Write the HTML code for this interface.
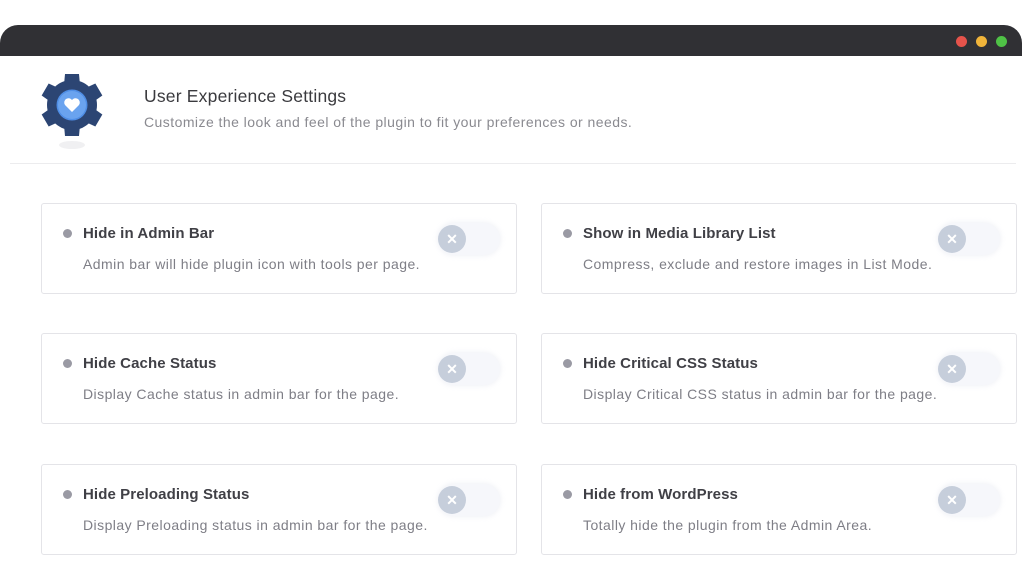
<!DOCTYPE html>
<html><head><style>
body{margin:0;width:1024px;height:576px;background:#fff;font-family:"Liberation Sans",sans-serif;position:relative;overflow:hidden}
.bar{position:absolute;left:0;top:25px;width:1022px;height:31px;background:#303034;border-radius:18px 18px 0 0}
.d{position:absolute;top:36px;width:11px;height:11px;border-radius:50%}
.h1{position:absolute;left:144px;top:86px;font-size:17.5px;color:#3a3a3e;letter-spacing:.2px}
.sub{position:absolute;left:144px;top:114px;font-size:14px;color:#8a8a90;letter-spacing:.45px}
.div{position:absolute;left:10px;top:163px;width:1006px;height:1px;background:#ececee}
.card{position:absolute;width:476px;height:91px;border:1px solid #e4e4e8;border-radius:3px;box-sizing:border-box}
.card .dot{position:absolute;left:21px;top:25px;width:9px;height:9px;border-radius:50%;background:#9a9aa4}
.card .t{position:absolute;left:41px;top:21px;font-size:15px;font-weight:bold;color:#404046;letter-spacing:.1px}
.card .s{position:absolute;left:41px;top:52px;font-size:14px;color:#7e7e86;letter-spacing:.45px}
.tg{position:absolute;left:396px;top:19px;width:62px;height:32px;border-radius:16px;background:#f6f7fb;box-shadow:0 0 6px rgba(230,232,240,.8)}
.tg .k{position:absolute;left:0px;top:2px;width:28px;height:28px;border-radius:50%;background:#c6cedb;color:#fff;font-size:14px;font-weight:bold;text-align:center;line-height:28px}
</style></head><body>
<div class="bar"></div>
<div class="d" style="left:956px;background:#e5534b"></div>
<div class="d" style="left:976px;background:#f0b43a"></div>
<div class="d" style="left:996px;background:#4fc246"></div>
<svg style="position:absolute;left:37px;top:70px" width="72" height="85" viewBox="0 0 72 85">
<ellipse cx="35" cy="75" rx="13" ry="4" fill="#f0f0f2"/>
<g transform="translate(35,35)" fill="#2c4573">
<circle r="25"/>
<g id="t"><path d="M-7 -31 H7 L8 -20 H-8 Z"/></g>
<use href="#t" transform="rotate(60)"/><use href="#t" transform="rotate(120)"/><use href="#t" transform="rotate(180)"/><use href="#t" transform="rotate(240)"/><use href="#t" transform="rotate(300)"/>
<circle r="15.5" fill="#4f8ee6"/><circle r="14" fill="#6aa3ef"/>
<path d="M0 7 L-7 0 A3.8 3.8 0 0 1 0 -5 A3.8 3.8 0 0 1 7 0 Z" fill="#fff"/>
</g></svg>
<div class="h1">User Experience Settings</div>
<div class="sub">Customize the look and feel of the plugin to fit your preferences or needs.</div>
<div class="div"></div>

<div class="card" style="left:41px;top:203px"><div class="dot"></div><div class="t">Hide in Admin Bar</div><div class="s">Admin bar will hide plugin icon with tools per page.</div><div class="tg"><div class="k">✕</div></div></div>
<div class="card" style="left:541px;top:203px"><div class="dot"></div><div class="t">Show in Media Library List</div><div class="s">Compress, exclude and restore images in List Mode.</div><div class="tg"><div class="k">✕</div></div></div>
<div class="card" style="left:41px;top:333px"><div class="dot"></div><div class="t">Hide Cache Status</div><div class="s">Display Cache status in admin bar for the page.</div><div class="tg"><div class="k">✕</div></div></div>
<div class="card" style="left:541px;top:333px"><div class="dot"></div><div class="t">Hide Critical CSS Status</div><div class="s">Display Critical CSS status in admin bar for the page.</div><div class="tg"><div class="k">✕</div></div></div>
<div class="card" style="left:41px;top:464px"><div class="dot"></div><div class="t">Hide Preloading Status</div><div class="s">Display Preloading status in admin bar for the page.</div><div class="tg"><div class="k">✕</div></div></div>
<div class="card" style="left:541px;top:464px"><div class="dot"></div><div class="t">Hide from WordPress</div><div class="s">Totally hide the plugin from the Admin Area.</div><div class="tg"><div class="k">✕</div></div></div>
</body></html>
